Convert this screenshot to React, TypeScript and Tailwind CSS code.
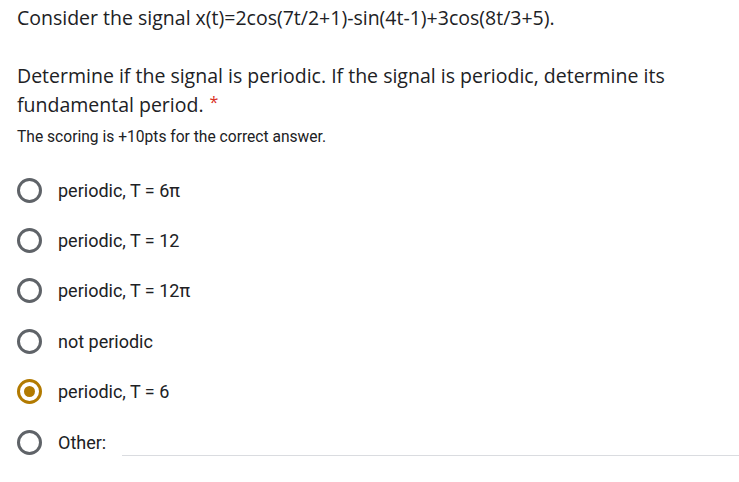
import React from 'react';

const options = [
  { label: 'periodic, T = 6π', checked: false },
  { label: 'periodic, T = 12', checked: false },
  { label: 'periodic, T = 12π', checked: false },
  { label: 'not periodic', checked: false },
  { label: 'periodic, T = 6', checked: true },
];

function Radio({ checked }: { checked: boolean }) {
  return (
    <div
      className={`w-[25px] h-[25px] rounded-full border-[3px] flex items-center justify-center shrink-0 ${
        checked ? 'border-[#b27a00]' : 'border-[#5f6368]'
      }`}
    >
      {checked && <div className="w-[11px] h-[11px] rounded-full bg-[#b27a00]" />}
    </div>
  );
}

export default function App() {
  return (
    <div className="w-[739px] h-[482px] bg-white text-[#202124] pl-[17px] overflow-hidden">
      {/* Section header */}
      <div className="pt-[3px] text-[19.5px] leading-[29px] font-['Open_Sans',sans-serif]">
        Consider the signal x(t)=2cos(7t/2+1)-sin(4t-1)+3cos(8t/3+5).
      </div>

      {/* Question */}
      <div className="mt-[29px] h-[58px] pr-4 text-[19.5px] leading-[29px] font-['Open_Sans',sans-serif]">
        Determine if the signal is periodic. If the signal is periodic, determine its fundamental period.
        <span className="text-[#d93025] ml-[6px] text-[16px] leading-none relative top-[-4px]">*</span>
      </div>
      <div className="mt-[8px] text-[15.6px] leading-[20px] font-['Roboto',sans-serif]">
        The scoring is +10pts for the correct answer.
      </div>

      {/* Options */}
      <div className="mt-[18px] flex flex-col font-['Roboto',sans-serif] text-[18px]">
        {options.map((o) => (
          <div key={o.label} className="h-[50.4px] flex items-center">
            <Radio checked={o.checked} />
            <span className="ml-[16px]">{o.label}</span>
          </div>
        ))}
        <div className="h-[50.4px] flex items-center">
          <Radio checked={false} />
          <span className="ml-[16px]">Other:</span>
          <div className="ml-[16px] flex-1 self-stretch flex items-end pb-[11px]">
            <div className="w-full border-b border-[#dadce0]" />
          </div>
        </div>
      </div>
    </div>
  );
}
